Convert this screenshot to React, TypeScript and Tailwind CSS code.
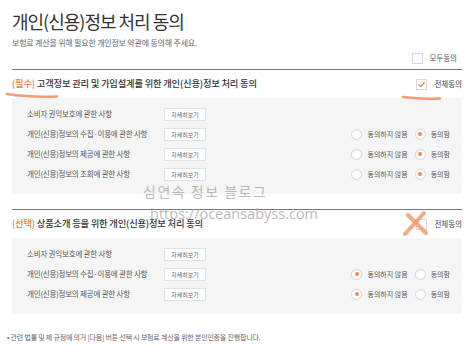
import React from 'react';

type Item = {
  label: string;
  choice?: 'yes' | 'no';
};

const required: Item[] = [
  { label: '소비자 권익보호에 관한 사항' },
  { label: '개인(신용)정보의 수집·이용에 관한 사항', choice: 'yes' },
  { label: '개인(신용)정보의 제공에 관한 사항', choice: 'yes' },
  { label: '개인(신용)정보의 조회에 관한 사항', choice: 'yes' },
];

const optional: Item[] = [
  { label: '소비자 권익보호에 관한 사항' },
  { label: '개인(신용)정보의 수집·이용에 관한 사항', choice: 'no' },
  { label: '개인(신용)정보의 제공에 관한 사항', choice: 'no' },
];

function CheckBox({ checked }: { checked?: boolean }) {
  return (
    <span className="flex w-[11px] h-[11px] border border-[#d6d6d6] bg-white items-center justify-center">
      {checked && (
        <svg width="9" height="9" viewBox="0 0 9 9">
          <path d="M1.6 4.6 L3.7 6.6 L7.6 2.2" fill="none" stroke="#ee7d45" strokeWidth="1.3" />
        </svg>
      )}
    </span>
  );
}

function Radio({ on, text }: { on: boolean; text: string }) {
  return (
    <span className="flex items-center gap-[5px]">
      <span className="flex w-[11px] h-[11px] rounded-full border border-[#d4d4d4] bg-white items-center justify-center">
        {on && <span className="w-[4px] h-[4px] rounded-full bg-[#ec8a4f]" />}
      </span>
      <span className="text-[7px] text-[#555]">{text}</span>
    </span>
  );
}

function Section({ tag, title, checked, items }: { tag: string; title: string; checked?: boolean; items: Item[] }) {
  return (
    <div className="border-t border-[#777]">
      <div className="flex items-center justify-between h-[28px]">
        <p className="text-[9.3px] font-medium text-[#333] tracking-[-0.2px]">
          <span className="text-[#ef7a3d]">{tag}</span> {title}
        </p>
        <div className="flex items-center gap-[7px]">
          <CheckBox checked={checked} />
          <span className="text-[7.5px] text-[#444]">전체동의</span>
        </div>
      </div>
      <div className="bg-[#f5f5f5] pt-[6px] pb-[10px] pl-[15px] pr-[12px]">
        {items.map((it, i) => (
          <div key={i} className="flex items-center h-[20px]">
            <span className="w-[137px] text-[7.5px] text-[#555] tracking-[-0.2px] whitespace-nowrap">{it.label}</span>
            <span className="flex w-[42px] h-[13px] items-center justify-center bg-white border border-[#e2e2e2] text-[6px] text-[#666]">
              자세히보기
            </span>
            {it.choice && (
              <div className="ml-auto flex items-center gap-[7px]">
                <Radio on={it.choice === 'no'} text="동의하지 않음" />
                <Radio on={it.choice === 'yes'} text="동의함" />
              </div>
            )}
          </div>
        ))}
      </div>
    </div>
  );
}

export default function App() {
  return (
    <div className="relative w-[474px] h-[362px] overflow-hidden bg-white font-['Noto_Sans_CJK_KR',sans-serif]">
      <div className="px-3 pt-[8px]">
        <h1 className="text-[18px] leading-[26px] text-[#333] tracking-[-1px]">개인(신용)정보 처리 동의</h1>
        <p className="mt-[3px] text-[8px] text-[#666] tracking-[-0.2px]">보험료 계산을 위해 필요한 개인정보 약관에 동의해 주세요.</p>
        <div className="flex justify-end items-center gap-[6px] mt-[3px] mr-[5px] h-[12px]">
          <CheckBox />
          <span className="text-[7.5px] text-[#555]">모두동의</span>
        </div>
        <div className="mt-[5px]">
          <Section tag="(필수)" title="고객정보 관리 및 가입설계를 위한 개인(신용)정보 처리 동의" checked items={required} />
        </div>
        <div className="mt-[15px]">
          <Section tag="(선택)" title="상품소개 등을 위한 개인(신용)정보 처리 동의" items={optional} />
        </div>
      </div>
      <p className="mt-[18px] pl-[7px] text-[7px] text-[#666] tracking-[-0.2px]">
        • 관련 법률 및 제 규정에 의거 [다음] 버튼 선택 시 보험료 계산을 위한 본인인증을 진행합니다.
      </p>

      {/* watermark */}
      <p className="absolute left-[143px] top-[181px] text-[14px] tracking-[1.5px] text-[#a8a8a8]/80 pointer-events-none">
        심연속 정보 블로그
      </p>
      <p className="absolute left-[150px] top-[203px] text-[14.5px] font-['Open_Sans',sans-serif] text-[#a8a8a8]/80 pointer-events-none">
        https://oceansabyss.com
      </p>

      {/* hand-drawn marks */}
      <svg className="absolute inset-0 pointer-events-none" width="474" height="362">
        <path d="M7 94 Q30 97.5 57 96.5" fill="none" stroke="#f0895c" strokeOpacity="0.85" strokeWidth="2.5" strokeLinecap="round" />
        <path d="M403 97 Q420 99.5 440 98.5" fill="none" stroke="#f0895c" strokeOpacity="0.85" strokeWidth="2.5" strokeLinecap="round" />
        <path d="M405 234 L424 213" fill="none" stroke="#f29a72" strokeOpacity="0.85" strokeWidth="4" strokeLinecap="round" />
        <path d="M408 215 L426 233" fill="none" stroke="#f29a72" strokeOpacity="0.85" strokeWidth="4" strokeLinecap="round" />
      </svg>
    </div>
  );
}
